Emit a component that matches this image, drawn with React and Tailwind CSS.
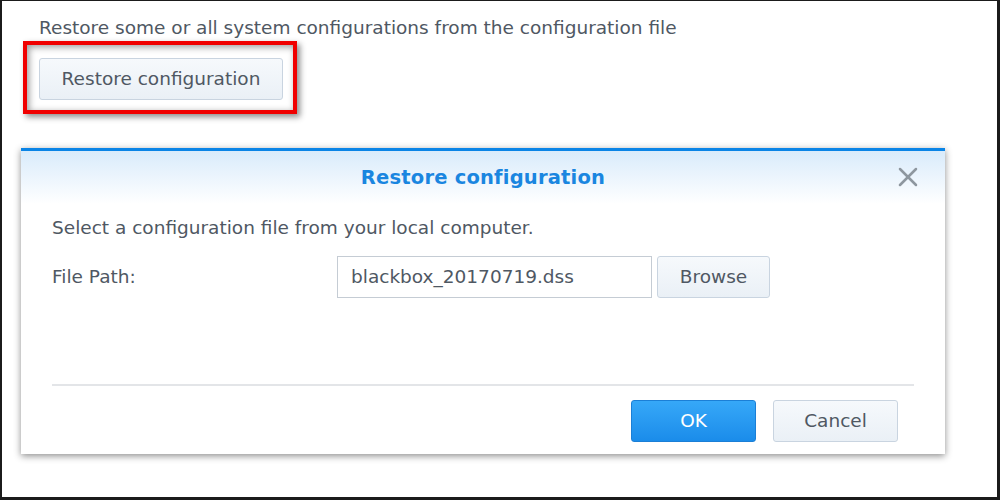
import { X } from 'lucide-react';

const font = { fontFamily: '"DejaVu Sans", Verdana, sans-serif' };

export default function App() {
  return (
    <div
      className="w-[1000px] h-[500px] bg-white border-l-2 border-t border-r-[3px] border-b-[3px] border-[#1b1b1b] text-[#4f5863] overflow-hidden"
      style={font}
    >
      {/* ── Section intro ─────────────────────────── */}
      <p className="ml-[37px] pt-[16px] text-[18.5px] leading-[22px] whitespace-nowrap">
        Restore some or all system configurations from the configuration file
      </p>

      {/* ── Highlighted button ────────────────────── */}
      <div className="ml-[21px] mt-[2px] w-[274px] h-[73px] border-4 border-[#f00000] pl-[12px] pt-[13px] shadow-[3px_3px_6px_rgba(0,0,0,0.45),inset_2px_2px_7px_rgba(0,0,0,0.4)]">
        <button className="w-[244px] h-[42px] rounded-[3px] border border-[#c9d4e0] bg-gradient-to-b from-[#f6f9fc] to-[#eaf0f6] text-[18.5px] leading-[22px] text-[#4f5863]">
          Restore configuration
        </button>
      </div>

      {/* ── Dialog ───────────────────────────────── */}
      <div className="ml-[19px] mt-[34px] w-[924px] h-[306px] bg-white border-t-[3px] border-[#0a84e6] shadow-[0_2px_7px_rgba(0,0,0,0.45)] flex flex-col">
        <div className="h-[53px] bg-gradient-to-b from-[#d9ebfb] to-white flex items-center relative">
          <h2 className="flex-1 text-center text-[19.5px] leading-[24px] font-bold tracking-[0.2px] text-[#1a86e0]">
            Restore configuration
          </h2>
          <X className="absolute right-[21px] top-[10px] w-[32px] h-[32px] text-[#8e979f]" strokeWidth={1.9} />
        </div>

        <div className="flex-1 flex flex-col px-[31px]">
          <p className="mt-[13px] text-[18.5px] leading-[22px]">
            Select a configuration file from your local computer.
          </p>
          <div className="mt-[17px] flex items-center text-[18.5px] leading-[22px]">
            <span className="w-[285px]">File Path:</span>
            <div className="w-[315px] h-[42px] border border-[#c5ccd4] bg-white flex items-center pl-[13px]">
              blackbox_20170719.dss
            </div>
            <button className="ml-[5px] w-[113px] h-[42px] rounded-[3px] border border-[#c9d4e0] bg-gradient-to-b from-[#f6f9fc] to-[#eaf0f6] text-[#4f5863]">
              Browse
            </button>
          </div>

          <div className="mt-[86px] h-[2px] bg-[#e3e5e8]" />

          <div className="mt-[14px] flex justify-end gap-[17px] pr-[16px] text-[18.5px] leading-[22px]">
            <button className="w-[125px] h-[42px] rounded-[3px] border border-[#1b7fd6] bg-gradient-to-b from-[#36a8f8] to-[#1a8cea] text-white">
              OK
            </button>
            <button className="w-[125px] h-[42px] rounded-[3px] border border-[#c9d4e0] bg-gradient-to-b from-[#f6f9fc] to-[#eaf0f6] text-[#4f5863]">
              Cancel
            </button>
          </div>
        </div>
      </div>
    </div>
  );
}
